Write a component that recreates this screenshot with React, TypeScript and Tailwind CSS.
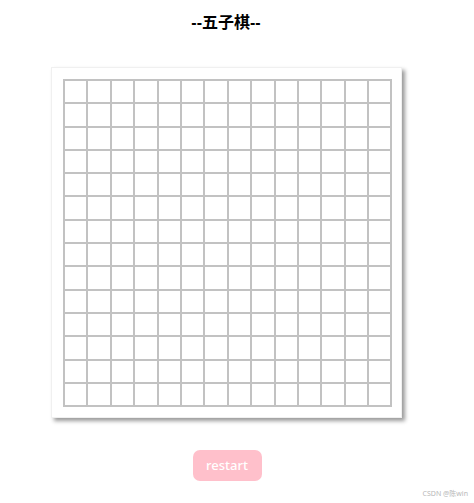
import { useState } from "react";

const SIZE = 14;

function Board() {
  const cells = Array.from({ length: SIZE * SIZE }, (_, i) => i);
  return (
    <div className="w-[351px] h-[351px] p-[11px] bg-white border border-[#f0f0f0] shadow-[3px_3px_4px_#9a9a9a]">
      <div className="grid grid-cols-[repeat(14,23.4px)] border border-[#c2c2c2] w-max">
        {cells.map((i) => (
          <div
            key={i}
            className="w-[23.4px] h-[23.3px] border border-[#c2c2c2]"
          />
        ))}
      </div>
    </div>
  );
}

function App() {
  const [round, setRound] = useState(0);

  return (
    <div
      key={round}
      className="relative w-[474px] h-[503px] bg-white overflow-hidden font-['Liberation_Sans','Noto_Sans_CJK_SC',sans-serif]"
    >
      <div className="w-[452px] flex flex-col items-center">
        <h3 className="mt-[12px] text-[16px] leading-[22px] font-bold text-black">
          --五子棋--
        </h3>
        <div className="mt-[33px] pl-[1px]">
          <Board />
        </div>
        <button
          className="mt-[32px] ml-[2px] w-[69px] h-[31px] rounded-[7px] bg-[#ffc0cb] text-white text-[13px] font-medium font-['Noto_Sans',sans-serif] cursor-pointer"
          onClick={() => setRound((r) => r + 1)}
        >
          restart
        </button>
      </div>
      <span className="absolute right-[6px] bottom-[5px] text-[7px] leading-[8px] text-[#b8b8b8] font-['Noto_Sans','Noto_Sans_CJK_SC',sans-serif]">
        CSDN @陈win
      </span>
    </div>
  );
}

export default App;
